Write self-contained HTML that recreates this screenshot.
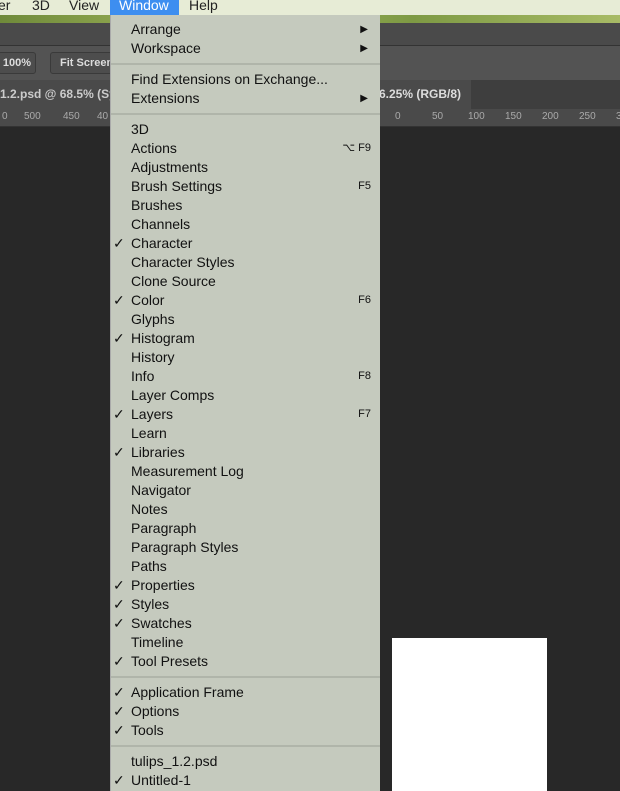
<!DOCTYPE html><html><head><style>
body{margin:0;width:620px;height:791px;overflow:hidden;background:#282828;position:relative;font-family:"Liberation Sans",sans-serif}
.a{position:absolute}
.mb{top:0;left:0;width:620px;height:15px;background:#e7ecd6;font-size:14px;color:#222}
.mb span{position:absolute;top:-3px}
.menu{left:110px;top:15px;width:269px;height:776px;background:#c5cabe;border-left:1px solid #aaa;font-size:14px;color:#111}
.it{position:absolute;left:20px;height:19px;line-height:19px;width:240px;white-space:nowrap}
.ck{position:absolute;left:-18px}
.sc{position:absolute;right:0;font-size:11px;top:0}
.ar{position:absolute;right:3px;font-size:10px}
.sep{position:absolute;left:0;width:269px;height:2px;background:#b0b5aa}
.rl{font-size:10px;color:#aaa;top:111px}
</style></head><body>
<div class="a" style="top:15px;left:0;width:620px;height:8px;background:linear-gradient(90deg,#6f8a3a,#9fb55a,#7e9a44,#a8bb66)"></div>
<div class="a" style="top:23px;left:0;width:620px;height:22px;background:#4a4a4a;border-bottom:1px solid #333"></div>
<div class="a" style="top:46px;left:0;width:620px;height:34px;background:#535353"></div>
<div class="a" style="top:52px;left:-2px;width:36px;height:20px;border:1px solid #3a3a3a;border-radius:3px;background:#4d4d4d;color:#ddd;font-size:11px;line-height:20px;text-align:center;font-weight:bold">100%</div>
<div class="a" style="top:52px;left:50px;width:70px;height:20px;border:1px solid #3a3a3a;border-radius:3px;background:#4d4d4d;color:#ddd;font-size:11px;line-height:20px;padding-left:9px;font-weight:bold;white-space:nowrap;overflow:hidden">Fit Screen</div>
<div class="a" style="top:80px;left:0;width:620px;height:29px;background:#3e3e3e"></div>
<div class="a" style="top:80px;left:0;width:110px;height:29px;background:#4a4a4a;color:#ccc;font-size:12px;line-height:29px;font-weight:bold;white-space:nowrap;overflow:hidden">1.2.psd @ 68.5% (Sy</div>
<div class="a" style="top:80px;left:379px;width:92px;height:29px;background:#4a4a4a;color:#ddd;font-size:12px;line-height:29px;font-weight:bold;white-space:nowrap">6.25% (RGB/8)</div>
<div class="a" style="top:109px;left:0;width:620px;height:17px;background:#4a4a4a;border-bottom:1px solid #333"></div>
<div class="a rl" style="left:2px">0</div><div class="a rl" style="left:24px">500</div><div class="a rl" style="left:63px">450</div><div class="a rl" style="left:97px">40</div>
<div class="a rl" style="left:395px">0</div><div class="a rl" style="left:432px">50</div><div class="a rl" style="left:468px">100</div><div class="a rl" style="left:505px">150</div><div class="a rl" style="left:542px">200</div><div class="a rl" style="left:579px">250</div><div class="a rl" style="left:616px">3</div>
<div class="a" style="left:392px;top:638px;width:155px;height:153px;background:#fff"></div>
<div class="a mb"><span style="left:-2px">er</span><span style="left:32px">3D</span><span style="left:69px">View</span><span style="left:110px;width:69px;height:16px;background:#3d8ef0;top:0"></span><span style="left:119px;color:#fff">Window</span><span style="left:189px">Help</span></div>
<div class="a menu">
<div class="it" style="top:5px">Arrange<span class="ar">▶</span></div>
<div class="it" style="top:24px">Workspace<span class="ar">▶</span></div>
<div class="sep" style="top:48px"></div>
<div class="it" style="top:55px">Find Extensions on Exchange...</div>
<div class="it" style="top:74px">Extensions<span class="ar">▶</span></div>
<div class="sep" style="top:98px"></div>
<div class="it" style="top:105px">3D</div>
<div class="it" style="top:124px">Actions<span class="sc">⌥ F9</span></div>
<div class="it" style="top:143px">Adjustments</div>
<div class="it" style="top:162px">Brush Settings<span class="sc">F5</span></div>
<div class="it" style="top:181px">Brushes</div>
<div class="it" style="top:200px">Channels</div>
<div class="it" style="top:219px"><span class="ck">✓</span>Character</div>
<div class="it" style="top:238px">Character Styles</div>
<div class="it" style="top:257px">Clone Source</div>
<div class="it" style="top:276px"><span class="ck">✓</span>Color<span class="sc">F6</span></div>
<div class="it" style="top:295px">Glyphs</div>
<div class="it" style="top:314px"><span class="ck">✓</span>Histogram</div>
<div class="it" style="top:333px">History</div>
<div class="it" style="top:352px">Info<span class="sc">F8</span></div>
<div class="it" style="top:371px">Layer Comps</div>
<div class="it" style="top:390px"><span class="ck">✓</span>Layers<span class="sc">F7</span></div>
<div class="it" style="top:409px">Learn</div>
<div class="it" style="top:428px"><span class="ck">✓</span>Libraries</div>
<div class="it" style="top:447px">Measurement Log</div>
<div class="it" style="top:466px">Navigator</div>
<div class="it" style="top:485px">Notes</div>
<div class="it" style="top:504px">Paragraph</div>
<div class="it" style="top:523px">Paragraph Styles</div>
<div class="it" style="top:542px">Paths</div>
<div class="it" style="top:561px"><span class="ck">✓</span>Properties</div>
<div class="it" style="top:580px"><span class="ck">✓</span>Styles</div>
<div class="it" style="top:599px"><span class="ck">✓</span>Swatches</div>
<div class="it" style="top:618px">Timeline</div>
<div class="it" style="top:637px"><span class="ck">✓</span>Tool Presets</div>
<div class="sep" style="top:661px"></div>
<div class="it" style="top:668px"><span class="ck">✓</span>Application Frame</div>
<div class="it" style="top:687px"><span class="ck">✓</span>Options</div>
<div class="it" style="top:706px"><span class="ck">✓</span>Tools</div>
<div class="sep" style="top:730px"></div>
<div class="it" style="top:737px">tulips_1.2.psd</div>
<div class="it" style="top:756px"><span class="ck">✓</span>Untitled-1</div>
</div>
</body></html>
